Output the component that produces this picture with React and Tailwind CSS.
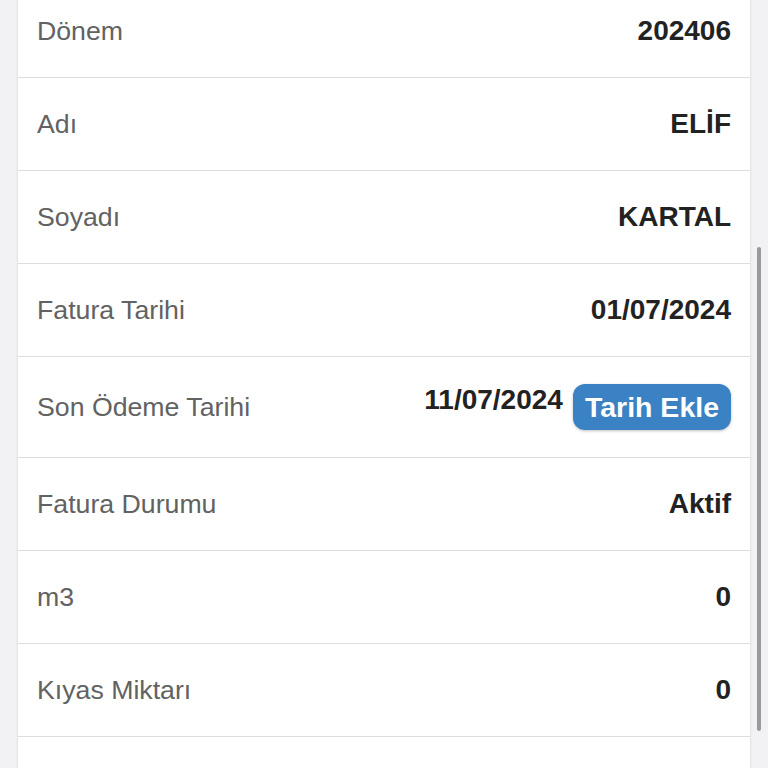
const rows = [
    { label: "Dönem", value: "202406" },
    { label: "Adı", value: "ELİF" },
    { label: "Soyadı", value: "KARTAL" },
    { label: "Fatura Tarihi", value: "01/07/2024" },
    { label: "Son Ödeme Tarihi", value: "11/07/2024", button: "Tarih Ekle" },
    { label: "Fatura Durumu", value: "Aktif" },
    { label: "m3", value: "0" },
    { label: "Kıyas Miktarı", value: "0" },
    { label: "", value: "" },
];

const App = () => {
    return (
        <div className="relative w-full h-[768px] overflow-hidden bg-[#f2f2f5] font-['Liberation_Sans',Arial,sans-serif]">
            <div className="ml-[18px] w-[732px] -mt-[15px] bg-white shadow-[0_0_3px_rgba(0,0,0,0.12)]">
                {rows.map((row, index) => (
                    <div
                        key={index}
                        className={`flex items-center justify-between px-[19px] border-b border-[#dedede] ${row.button ? "py-[27px]" : "py-[32px]"}`}
                    >
                        <p className="text-[26.7px] leading-[28px] text-[#626262]">{row.label}</p>
                        {row.button ? (
                            <div className="flex items-start gap-[10px]">
                                <p className="text-[28px] leading-[28px] font-bold text-[#222] mt-[2px]">{row.value}</p>
                                <button className="h-[46px] px-[12px] rounded-[12px] bg-[#3b82c4] text-white text-[28.5px] leading-[28px] font-bold shadow-[0_1px_3px_rgba(0,0,0,0.25)]">
                                    {row.button}
                                </button>
                            </div>
                        ) : (
                            <p className="text-[28px] leading-[28px] font-bold text-[#222]">{row.value || "\u00a0"}</p>
                        )}
                    </div>
                ))}
            </div>
            {/* scrollbar */}
            <div className="absolute top-[247px] left-[757px] w-[4px] h-[484px] rounded-full bg-[#9a9a9a]" />
        </div>
    );
};

export default App;
